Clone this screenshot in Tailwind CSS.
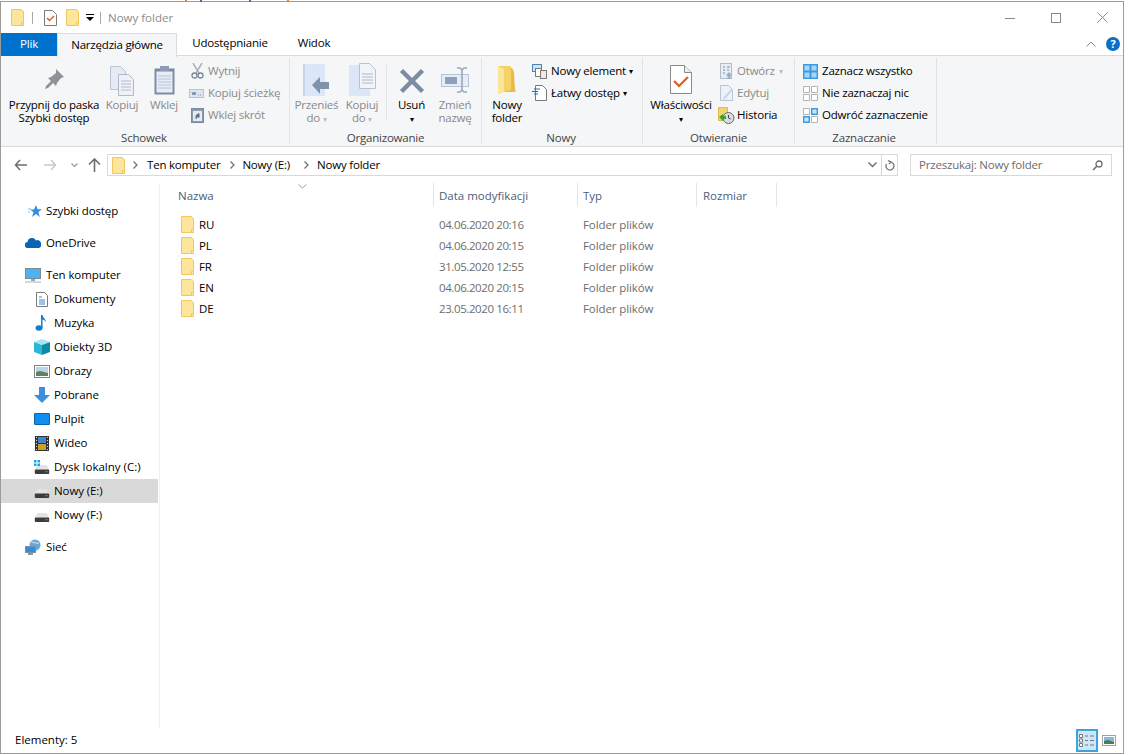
<!DOCTYPE html>
<html lang="pl">
<head>
<meta charset="UTF-8" />
<title>Nowy folder</title>
<script src="https://cdn.jsdelivr.net/npm/@tailwindcss/browser@4"></script>
</head>
<body class="bg-white h-[755px] w-[1128px] overflow-hidden font-['Open_Sans',sans-serif] text-[11.5px] tracking-[-0.2px] leading-[14px] text-black">

<svg width="0" height="0" class="absolute">
  <symbol id="folder" viewBox="0 0 13 17">
    <path d="M.5.5h9.500l2.500 2v11h-2v3H.5z" fill="#fde59b" stroke="#eec85a"/>
    <path d="M10.500 13.500v3h2v-3z" fill="#fbe9ad" stroke="#eec85a"/>
  </symbol>
  <symbol id="drive" viewBox="0 0 16 10">
    <path d="M3 0h10l3 5H0z" fill="#e3e3e3"/>
    <rect y="5" width="16" height="5" rx="1" fill="#3d3d3d"/>
    <rect x="12" y="7" width="2" height="1" fill="#4ed964"/>
  </symbol>
</svg>

<!-- bits of the window behind -->
<div class="absolute left-[185px] top-0 w-[2px] h-[2px] bg-[#d9823b]"></div>
<div class="absolute left-[200px] top-0 w-[2px] h-[2px] bg-[#3a6ea5]"></div>
<div class="absolute left-[249px] top-0 w-[2px] h-[2px] bg-[#3a6ea5]"></div>
<div class="absolute left-[287px] top-0 w-[2px] h-[2px] bg-[#d9823b]"></div>

<div class="w-[1124px] h-[753px] mt-px border border-[#9c9c9c] flex flex-col bg-white">

  <!-- title bar -->
  <div class="h-[31px] flex items-center shrink-0">
    <svg class="ml-[10px]" width="13" height="17"><use href="#folder"/></svg>
    <div class="ml-[8px] w-px h-[12px] bg-[#a8a8a8]"></div>
    <svg class="ml-[11px]" width="13" height="16" viewBox="0 0 13 16"><path d="M.5.5h8l4 4v11H.5z" fill="#fff" stroke="#7a7a7a"/><path d="M3 8l2.500 2.500L10 6" fill="none" stroke="#e8591d" stroke-width="1.400"/></svg>
    <svg class="ml-[9px]" width="13" height="17"><use href="#folder"/></svg>
    <svg class="ml-[7px]" width="9" height="8" viewBox="0 0 9 8"><path d="M0 0h8v1H0zM0 3h8L4 7z" fill="#000"/></svg>
    <div class="ml-[5px] w-px h-[12px] bg-[#a8a8a8]"></div>
    <span class="ml-[7px] text-[#8c8c8c] tracking-normal">Nowy folder</span>
    <div class="ml-auto flex items-center -mr-[2px]">
      <div class="w-[46px] flex justify-center"><svg width="10" height="10"><path d="M0 5.500h10" stroke="#8a8a8a"/></svg></div>
      <div class="w-[46px] flex justify-center"><svg width="10" height="10"><rect x=".5" y=".5" width="9" height="9" fill="none" stroke="#8a8a8a"/></svg></div>
      <div class="w-[46px] flex justify-center"><svg width="11" height="11"><path d="M.5.500l10 10M10.500.5l-10 10" stroke="#8a8a8a"/></svg></div>
    </div>
  </div>

  <!-- tabs -->
  <div class="h-[23px] flex shrink-0 border-b border-[#dadbdc] relative">
    <div class="w-[56px] h-[23px] pb-px bg-[#0072ce] text-white flex items-center justify-center">Plik</div>
    <div class="w-[120px] h-[24px] pb-[2px] bg-[#f5f6f7] border-x border-t border-[#dadbdc] flex items-center justify-center z-10">Narzędzia główne</div>
    <div class="w-[106px] pb-[2px] flex items-center justify-center">Udostępnianie</div>
    <div class="w-[46px] pb-[2px] flex items-center justify-center ml-[8px]">Widok</div>
    <div class="ml-auto flex items-center mr-[3px] gap-[10px]">
      <svg width="10" height="6"><path d="M.5 5.500L5 1l4.500 4.500" fill="none" stroke="#8c8c8c"/></svg>
      <div class="w-[14px] h-[14px] rounded-full bg-[#0a6fc9] text-white font-bold text-[11px] flex items-center justify-center">?</div>
    </div>
  </div>

  <!-- ribbon -->
  <div class="h-[91px] bg-[#f5f6f7] border-b border-[#dadbdc] flex shrink-0">

    <!-- Schowek -->
    <div class="w-[289px] border-r border-[#e2e3e4] my-[2px] flex flex-col">
      <div class="flex-1 flex pt-[2px] text-[#8a8a8a]">
        <div class="w-[98px] ml-[4px] flex flex-col items-center text-black">
          <div class="h-[38px] flex items-start pt-[9px]">
            <svg width="22" height="21" viewBox="0 0 22 21"><path d="M13 0l8 8-3 1-4 5-1 3-3-3-5 5-3 1 1-3 5-5-3-3 3-1 5-4z" fill="#8d9299"/></svg>
          </div>
          <span class="text-center leading-[13px]">Przypnij do paska<br>Szybki dostęp</span>
        </div>
        <div class="w-[36px] ml-[1px] flex flex-col items-center">
          <div class="h-[38px] pt-[6px]">
            <svg width="24" height="30" viewBox="0 0 24 30"><path d="M.5.500h10l5 5v18H.5z" fill="#e6ebf3" stroke="#b9c3d2"/><path d="M8.500 8.500h10l5 5v16h-15z" fill="#eef2f8" stroke="#aeb9ca"/><path d="M11 15h10M11 18h10M11 21h10M11 24h10" stroke="#b3bccb"/></svg>
          </div>
          <span class="leading-[13px]">Kopiuj</span>
        </div>
        <div class="w-[44px] ml-[2px] flex flex-col items-center">
          <div class="h-[38px] pt-[5px]">
            <svg width="21" height="30" viewBox="0 0 21 30"><rect x=".5" y="3.500" width="20" height="26" fill="#7e8ca3"/><rect x="2.500" y="6.500" width="16" height="21" fill="#e7edf7"/><path d="M4 11h13M4 14h13M4 17h13M4 20h13M4 23h13" stroke="#b7c2d4"/><rect x="6" y="1" width="9" height="5" fill="#8e9bb0"/></svg>
          </div>
          <span class="leading-[13px]">Wklej</span>
        </div>
        <div class="ml-[5px] flex flex-col">
          <div class="h-[22px] flex items-center gap-[4px]">
            <svg width="13" height="16" viewBox="0 0 13 16"><path d="M2 0l6 10M11 0L5 10" stroke="#a9b0bb" stroke-width="1.500"/><circle cx="3.500" cy="12.500" r="2.500" fill="none" stroke="#7a8797" stroke-width="1.300"/><circle cx="9.500" cy="12.500" r="2.500" fill="none" stroke="#7a8797" stroke-width="1.300"/></svg>
            <span>Wytnij</span>
          </div>
          <div class="h-[22px] flex items-center gap-[4px] -ml-[2px]">
            <svg width="15" height="9" viewBox="0 0 15 9"><rect x=".5" y=".5" width="14" height="8" fill="#dde5f2" stroke="#b8c4d6"/><path d="M3 3l1 3 1-3 1 3 1-3M9 6h1M11 6h1" fill="none" stroke="#6a7a92" stroke-width=".8"/></svg>
            <span>Kopiuj ścieżkę</span>
          </div>
          <div class="h-[22px] flex items-center gap-[4px]">
            <svg width="13" height="16" viewBox="0 0 13 16"><rect x=".5" y="1.500" width="12" height="14" fill="#8b99ad" stroke="#7d8ba0"/><rect x="2" y="4" width="9" height="10" fill="#e6ebf3"/><path d="M5 12V8.500h3M8 6.500v4l-3-2z" fill="#5f6f88" stroke="#5f6f88"/></svg>
            <span>Wklej skrót</span>
          </div>
        </div>
      </div>
      <div class="h-[17px] text-center text-[#444] pt-[4px] pr-[2px]">Schowek</div>
    </div>

    <!-- Organizowanie -->
    <div class="w-[192px] border-r border-[#e2e3e4] my-[2px] flex flex-col">
      <div class="flex-1 flex pt-[2px] text-[#8a8a8a]">
        <div class="w-[45px] ml-[4px] flex flex-col items-center">
          <div class="h-[38px] pt-[4px]">
            <svg width="27" height="32" viewBox="0 0 27 32"><path d="M0 0h22v32H0z" fill="#dbe7f6"/><path d="M0 0h2v32H0z" fill="#c5d6ea"/><path d="M9 22l8-8v5h9v7h-9v5z" transform="translate(0 -1)" fill="#7f93ad"/></svg>
          </div>
          <span class="leading-[13px] text-center">Przenieś<br>do <span class="text-[#bbb] text-[8px]">▾</span></span>
        </div>
        <div class="w-[44px] ml-[1px] flex flex-col items-center">
          <div class="h-[38px] pt-[3px]">
            <svg width="27" height="33" viewBox="0 0 27 33"><path d="M0 2h21v31H0z" fill="#dbe7f6"/><path d="M10.500.5h10l6 6v19h-16z" fill="#f0f3f8" stroke="#b8c2d1"/><path d="M13 11h11M13 14h11M13 17h11M13 20h11" stroke="#b0bac9"/></svg>
          </div>
          <span class="leading-[13px] text-center">Kopiuj<br>do <span class="text-[#bbb] text-[8px]">▾</span></span>
        </div>
        <div class="w-px h-[55px] mt-[5px] ml-[2px] bg-[#e2e3e4]"></div>
        <div class="w-[45px] ml-[2px] flex flex-col items-center text-black">
          <div class="h-[38px] pt-[8px]">
            <svg width="26" height="26" viewBox="0 0 26 26"><path d="M2.500 2.500l21 21M23.500 2.500l-21 21" stroke="#7d8ba3" stroke-width="4.500"/></svg>
          </div>
          <span class="leading-[13px] text-center">Usuń<br><span class="text-[8px]">▾</span></span>
        </div>
        <div class="w-[42px] flex flex-col items-center">
          <div class="h-[38px] pt-[7px]">
            <svg width="28" height="26" viewBox="0 0 28 26"><rect x=".5" y="7.500" width="27" height="12" fill="#e6edf7" stroke="#b7c4d6"/><rect x="4" y="10" width="12" height="7" fill="#8da1bb"/><path d="M16 1h3l2 2 2-2h3M21 3v20M16 25h3l2-2 2 2h3" fill="none" stroke="#9aa7b9" stroke-width="1.600"/></svg>
          </div>
          <span class="leading-[13px] text-center">Zmień<br>nazwę</span>
        </div>
      </div>
      <div class="h-[17px] text-center text-[#444] pt-[4px]">Organizowanie</div>
    </div>

    <!-- Nowy -->
    <div class="w-[161px] border-r border-[#e2e3e4] my-[2px] flex flex-col">
      <div class="flex-1 flex pt-[2px]">
        <div class="w-[46px] ml-[2px] flex flex-col items-center">
          <div class="h-[38px] pt-[6px]">
            <svg width="19" height="28" viewBox="0 0 19 28"><path d="M0 0h13v8l5 18H6L0 28z" fill="#f6d365"/><path d="M13 2h1l2 4 1 19-2 1H6l7-2z" fill="#e9b949"/><path d="M0 0l6 3v23l-6 2z" fill="#fbe59c"/></svg>
          </div>
          <span class="leading-[13px] text-center">Nowy<br>folder</span>
        </div>
        <div class="ml-[2px] flex flex-col">
          <div class="h-[22px] flex items-center gap-[4px]">
            <svg width="15" height="15" viewBox="0 0 15 15"><rect x=".5" y=".5" width="9" height="7" fill="#cfe3f5" stroke="#4a85b8"/><rect x="3.500" y="4.500" width="6" height="8" fill="#fff" stroke="#7a7a7a"/><rect x="8.500" y="6.500" width="6" height="8" fill="#f7e4e4" stroke="#7a7a7a"/></svg>
            <span>Nowy element</span><span class="text-[8px] ml-[-1px]">▾</span>
          </div>
          <div class="h-[22px] flex items-center gap-[4px]">
            <svg width="15" height="16" viewBox="0 0 15 16"><path d="M3.500.5h7l4 4v11h-11z" fill="#fff" stroke="#7a7a7a"/><path d="M2 4h6M0 6.500h6M2 9h4" stroke="#1474c4"/></svg>
            <span>Łatwy dostęp</span><span class="text-[8px] ml-[-1px]">▾</span>
          </div>
        </div>
      </div>
      <div class="h-[17px] text-center text-[#444] pt-[4px] pr-[2px]">Nowy</div>
    </div>

    <!-- Otwieranie -->
    <div class="w-[152px] border-r border-[#e2e3e4] my-[2px] flex flex-col">
      <div class="flex-1 flex pt-[2px]">
        <div class="w-[68px] ml-[4px] flex flex-col items-center">
          <div class="h-[38px] pt-[5px]">
            <svg width="22" height="29" viewBox="0 0 22 29"><path d="M.5.500h14l7 7v21H.5z" fill="#fff" stroke="#8a8a8a"/><path d="M14.500.5v7h7" fill="#eee" stroke="#8a8a8a"/><path d="M4 16l5 5 9-9" fill="none" stroke="#e8591d" stroke-width="2.200"/></svg>
          </div>
          <span class="leading-[13px] text-center">Właściwości<br><span class="text-[8px]">▾</span></span>
        </div>
        <div class="ml-[5px] flex flex-col">
          <div class="h-[22px] flex items-center gap-[4px] text-[#8a8a8a]">
            <svg width="13" height="16" viewBox="0 0 13 16"><rect x=".5" y=".5" width="11" height="15" fill="#e8edf5" stroke="#b3bdcc"/><path d="M3 4h2M3 7h2M3 10h2M7 4h3M7 7h2" stroke="#7f8ea5" stroke-width="1.200"/><path d="M9 9l3.500 3.500H10.500V16H7.500v-3.500H5.500z" fill="#9eb0c7"/></svg>
            <span>Otwórz</span><span class="text-[8px] text-[#bbb]">▾</span>
          </div>
          <div class="h-[22px] flex items-center gap-[4px] text-[#8a8a8a]">
            <svg width="13" height="16" viewBox="0 0 13 16"><path d="M.5.5h8l4 4v11H.5z" fill="#eef2f8" stroke="#b9c3d2"/><path d="M3 13l8-9 1.500 1.500-8 9H3z" fill="#c8d6e8"/></svg>
            <span>Edytuj</span>
          </div>
          <div class="h-[22px] flex items-center gap-[2px] -ml-[2px]">
            <svg width="17" height="17" viewBox="0 0 17 17"><path d="M.5.5h9v13h-9z" fill="#f6d365" stroke="#e3bb4a"/><circle cx="10.500" cy="11" r="5.500" fill="#d8dcdf" stroke="#666"/><path d="M10.500 8v3l2 1" fill="none" stroke="#444"/><path d="M1 10l4-3v2h3v3H5v2z" fill="#3aa13a"/></svg>
            <span>Historia</span>
          </div>
        </div>
      </div>
      <div class="h-[17px] text-center text-[#444] pt-[4px]">Otwieranie</div>
    </div>

    <!-- Zaznaczanie -->
    <div class="w-[142px] border-r border-[#e2e3e4] my-[2px] flex flex-col">
      <div class="flex-1 pt-[2px] pl-[8px]">
        <div class="h-[22px] flex items-center gap-[4px]">
          <svg width="15" height="15" viewBox="0 0 15 15"><path d="M0 0h15v15H0z" fill="#3c9be0"/><path d="M1.500 1.500h5v5h-5zM8.500 1.500h5v5h-5zM1.500 8.500h5v5h-5zM8.500 8.500h5v5h-5z" fill="#a9d5f5"/></svg>
          <span>Zaznacz wszystko</span>
        </div>
        <div class="h-[22px] flex items-center gap-[4px]">
          <svg width="15" height="15" viewBox="0 0 15 15"><path d="M.5.500h6v6h-6zM8.500.500h6v6h-6zM.5 8.500h6v6h-6zM8.500 8.500h6v6h-6z" fill="#fff" stroke="#b5b5b5"/></svg>
          <span>Nie zaznaczaj nic</span>
        </div>
        <div class="h-[22px] flex items-center gap-[4px]">
          <svg width="15" height="15" viewBox="0 0 15 15"><path d="M.5.500h6v6h-6zM8.500 8.500h6v6h-6z" fill="#fff" stroke="#b5b5b5"/><path d="M8 0h7v7H8zM0 8h7v7H0z" fill="#3c9be0"/><path d="M9.500 1.500h4v4h-4zM1.500 9.500h4v4h-4z" fill="#cfe6f8"/></svg>
          <span>Odwróć zaznaczenie</span>
        </div>
      </div>
      <div class="h-[17px] text-center text-[#444] pt-[4px] pr-[3px]">Zaznaczanie</div>
    </div>
  </div>

  <!-- address bar -->
  <div class="h-[36px] flex items-center shrink-0">
    <svg class="ml-[13px]" width="13" height="12" viewBox="0 0 13 12"><path d="M6 1L1.500 6 6 11M2 6h11" fill="none" stroke="#6d6d6d" stroke-width="1.500"/></svg>
    <svg class="ml-[17px]" width="13" height="12" viewBox="0 0 13 12"><path d="M7 1l4.500 5L7 11M11 6H0" fill="none" stroke="#c9c9c9" stroke-width="1.500"/></svg>
    <svg class="ml-[14px]" width="7" height="5" viewBox="0 0 7 5"><path d="M.5.500L3.500 3.500 6.500.5" fill="none" stroke="#9a9a9a" stroke-width="1.200"/></svg>
    <svg class="ml-[10px]" width="13" height="14" viewBox="0 0 13 14"><path d="M1 6.500L6.500 1 12 6.500M6.500 1.500V14" fill="none" stroke="#6d6d6d" stroke-width="1.600"/></svg>
    <div class="ml-[6px] w-[775px] h-[22px] border border-[#d9d9d9] flex items-center">
      <svg class="ml-[4px]" width="13" height="17"><use href="#folder"/></svg>
      <svg class="ml-[8px]" width="5" height="8" viewBox="0 0 5 8"><path d="M.5.500L4 4 .5 7.500" fill="none" stroke="#6d6d6d" stroke-width="1.200"/></svg>
      <span class="ml-[9px]">Ten komputer</span>
      <svg class="ml-[10px]" width="5" height="8" viewBox="0 0 5 8"><path d="M.5.500L4 4 .5 7.500" fill="none" stroke="#6d6d6d" stroke-width="1.200"/></svg>
      <span class="ml-[7px]">Nowy (E:)</span>
      <svg class="ml-[14px]" width="5" height="8" viewBox="0 0 5 8"><path d="M.5.500L4 4 .5 7.500" fill="none" stroke="#6d6d6d" stroke-width="1.200"/></svg>
      <span class="ml-[8px]">Nowy folder</span>
      <svg class="ml-auto mr-[4px]" width="9" height="6" viewBox="0 0 9 6"><path d="M.5.500L4.500 4.500 8.500.5" fill="none" stroke="#6d6d6d" stroke-width="1.400"/></svg>
    </div>
    <div class="w-[16px] h-[22px] border border-l-0 border-[#d9d9d9] flex items-center justify-center">
      <svg width="10" height="12" viewBox="0 0 10 12"><path d="M3 1.500L6 3 4 5M5 3a4 4 0 1 1-3.500 2" fill="none" stroke="#6d6d6d" stroke-width="1.200"/></svg>
    </div>
    <div class="ml-[12px] w-[202px] h-[22px] border border-[#d9d9d9] flex items-center pl-[8px] pr-[8px] text-[#6d6d6d]">
      <span>Przeszukaj: Nowy folder</span>
      <svg class="ml-auto" width="11" height="11" viewBox="0 0 11 11"><circle cx="7" cy="4" r="3" fill="none" stroke="#6d6d6d" stroke-width="1.300"/><path d="M5 6l-4 4" stroke="#6d6d6d" stroke-width="1.600"/></svg>
    </div>
  </div>

  <!-- main -->
  <div class="flex-1 flex min-h-0">
    <!-- nav -->
    <div class="w-[157px] shrink-0 pt-[16px] leading-[24px] tracking-[-0.1px]">
      <div class="h-[24px] flex items-center pl-[27px]">
        <svg class="mr-[4px]" width="14" height="13" viewBox="0 0 14 13"><path d="M8 0l1.500 4.300H14L10.400 7l1.300 5-3.700-3-4 3 1.500-4.800L2 4.500h4z" fill="#2f8fdc"/><path d="M0 4h3M0 7h2" stroke="#7cbce9"/></svg>
        <span>Szybki dostęp</span>
      </div>
      <div class="h-[8px]"></div>
      <div class="h-[24px] flex items-center pl-[24px]">
        <svg class="mr-[5px]" width="16" height="10" viewBox="0 0 16 10"><path d="M3 10a3 3 0 0 1-.5-6A4.500 4.500 0 0 1 11 2.500a3.500 3.500 0 0 1 5 3.500v.5a3 3 0 0 1-2 3.500z" fill="#0a64b4"/></svg>
        <span>OneDrive</span>
      </div>
      <div class="h-[8px]"></div>
      <div class="h-[24px] flex items-center pl-[24px]">
        <svg class="mr-[5px]" width="16" height="15" viewBox="0 0 16 15"><rect x=".5" y=".5" width="15" height="10" fill="#4fb2ee" stroke="#7a8a99"/><path d="M6 11h4v2H6z" fill="#9aa7b3"/><path d="M0 14h16" stroke="#a8b3bd"/></svg>
        <span>Ten komputer</span>
      </div>
      <div class="h-[24px] flex items-center pl-[35px]">
        <svg class="mr-[6px]" width="12" height="15" viewBox="0 0 12 15"><path d="M.5.500h8l3 3v11H.5z" fill="#fff" stroke="#7a7a7a"/><path d="M3 5h3M3 8h6M3 10h6M3 12h6" stroke="#3a84c5"/></svg>
        <span>Dokumenty</span>
      </div>
      <div class="h-[24px] flex items-center pl-[35px]">
        <svg class="mr-[7px] -ml-[1px]" width="12" height="16" viewBox="0 0 12 16"><ellipse cx="4" cy="13" rx="3.500" ry="2.700" fill="#0c7fd9"/><path d="M6 13V0h1.500c.5 3 3 3.500 3.500 7-1-1.500-2.500-2.500-3.500-2.500V13z" fill="#0c7fd9"/></svg>
        <span>Muzyka</span>
      </div>
      <div class="h-[24px] flex items-center pl-[33px]">
        <svg class="mr-[4px]" width="16" height="16" viewBox="0 0 16 16"><path d="M8 0l8 3-8 3-8-3z" fill="#a5e6f5"/><path d="M0 3l8 3v10l-8-3z" fill="#2cb7d4"/><path d="M16 3L8 6v10l8-3z" fill="#0d8aa8"/></svg>
        <span>Obiekty 3D</span>
      </div>
      <div class="h-[24px] flex items-center pl-[33px]">
        <svg class="mr-[4px]" width="16" height="13" viewBox="0 0 16 13"><rect x=".5" y=".5" width="15" height="12" fill="#fff" stroke="#808080"/><rect x="2" y="2" width="12" height="9" fill="#bcd4e2"/><path d="M2 7l4-1 8 2v3H2z" fill="#5f8066"/></svg>
        <span>Obrazy</span>
      </div>
      <div class="h-[24px] flex items-center pl-[33px]">
        <svg class="mr-[4px]" width="16" height="16" viewBox="0 0 16 16"><path d="M5 0h6v8h5l-8 8-8-8h5z" fill="#3c8ede"/></svg>
        <span>Pobrane</span>
      </div>
      <div class="h-[24px] flex items-center pl-[33px]">
        <svg class="mr-[4px]" width="16" height="12" viewBox="0 0 16 12"><rect x=".5" y=".5" width="15" height="11" rx=".5" fill="#0f8ef0" stroke="#0a65ad"/></svg>
        <span>Pulpit</span>
      </div>
      <div class="h-[24px] flex items-center pl-[34px]">
        <svg class="mr-[5px]" width="14" height="15" viewBox="0 0 14 15"><rect width="14" height="15" fill="#333"/><rect x="3" y="1" width="8" height="6" fill="#3d87d0"/><rect x="3" y="8" width="8" height="6" fill="#c9a227"/><path d="M1 1h1v1H1zM1 4h1v1H1zM1 7h1v1H1zM1 10h1v1H1zM1 13h1v1H1zM12 1h1v1h-1zM12 4h1v1h-1zM12 7h1v1h-1zM12 10h1v1h-1zM12 13h1v1h-1z" fill="#ddd"/></svg>
        <span>Wideo</span>
      </div>
      <div class="h-[24px] flex items-center pl-[33px]">
        <div class="relative w-[16px] h-[14px] mr-[4px]">
          <svg class="absolute left-0 bottom-0" width="16" height="9"><use href="#drive"/></svg>
          <svg class="absolute left-0 top-0" width="6" height="6" viewBox="0 0 6 6"><path d="M0 0h2.500v2.500H0zM3.500 0H6v2.500H3.500zM0 3.500h2.500V6H0zM3.500 3.500H6V6H3.500z" fill="#10a5ec"/></svg>
        </div>
        <span class="tracking-normal">Dysk lokalny (C:)</span>
      </div>
      <div class="h-[24px] flex items-center pl-[33px] bg-[#d9d9d9]">
        <svg class="mr-[4px] mt-[4px]" width="16" height="9"><use href="#drive"/></svg>
        <span>Nowy (E:)</span>
      </div>
      <div class="h-[24px] flex items-center pl-[33px]">
        <svg class="mr-[4px] mt-[4px]" width="16" height="9"><use href="#drive"/></svg>
        <span>Nowy (F:)</span>
      </div>
      <div class="h-[8px]"></div>
      <div class="h-[24px] flex items-center pl-[24px]">
        <svg class="mr-[5px]" width="16" height="16" viewBox="0 0 16 16"><circle cx="10" cy="6" r="5.500" fill="#6aa7da"/><path d="M6 3c3 0 5 2 8 1" stroke="#cfe6f5" fill="none"/><rect x=".5" y="7.500" width="10" height="6" fill="#2e8fe0" stroke="#7f8f9f"/><path d="M3 15h5" stroke="#8a97a3" stroke-width="2"/></svg>
        <span>Sieć</span>
      </div>
    </div>
    <div class="w-[2px] border-r border-[#f0f0f0] shrink-0"></div>

    <!-- file list -->
    <div class="flex-1 relative text-[#6d6d6d]">
      <svg class="absolute left-[138px] top-[1px]" width="9" height="5" viewBox="0 0 9 5"><path d="M.5.500L4.500 4 8.500.5" fill="none" stroke="#a0a0a0"/></svg>
      <div class="h-[24px] flex text-[#4c607a] tracking-normal">
        <div class="w-[274px] pl-[18px] pt-[6px] border-r border-[#e5e5e5]">Nazwa</div>
        <div class="w-[144px] pl-[5px] pt-[6px] border-r border-[#e5e5e5]">Data modyfikacji</div>
        <div class="w-[119px] pl-[5px] pt-[6px] border-r border-[#e5e5e5]">Typ</div>
        <div class="w-[80px] pl-[6px] pt-[6px] border-r border-[#e5e5e5]">Rozmiar</div>
      </div>
      <div class="mt-[7px]">
        <div class="h-[21px] flex items-center">
          <div class="w-[274px] pl-[21px] flex items-center text-black"><svg width="13" height="17"><use href="#folder"/></svg><span class="ml-[5px]">RU</span></div>
          <div class="w-[144px] pl-[5px] tracking-[-0.4px]">04.06.2020 20:16</div>
          <div class="pl-[5px] tracking-[-0.1px]">Folder plików</div>
        </div>
        <div class="h-[21px] flex items-center">
          <div class="w-[274px] pl-[21px] flex items-center text-black"><svg width="13" height="17"><use href="#folder"/></svg><span class="ml-[5px]">PL</span></div>
          <div class="w-[144px] pl-[5px] tracking-[-0.4px]">04.06.2020 20:15</div>
          <div class="pl-[5px] tracking-[-0.1px]">Folder plików</div>
        </div>
        <div class="h-[21px] flex items-center">
          <div class="w-[274px] pl-[21px] flex items-center text-black"><svg width="13" height="17"><use href="#folder"/></svg><span class="ml-[5px]">FR</span></div>
          <div class="w-[144px] pl-[5px] tracking-[-0.4px]">31.05.2020 12:55</div>
          <div class="pl-[5px] tracking-[-0.1px]">Folder plików</div>
        </div>
        <div class="h-[21px] flex items-center">
          <div class="w-[274px] pl-[21px] flex items-center text-black"><svg width="13" height="17"><use href="#folder"/></svg><span class="ml-[5px]">EN</span></div>
          <div class="w-[144px] pl-[5px] tracking-[-0.4px]">04.06.2020 20:15</div>
          <div class="pl-[5px] tracking-[-0.1px]">Folder plików</div>
        </div>
        <div class="h-[21px] flex items-center">
          <div class="w-[274px] pl-[21px] flex items-center text-black"><svg width="13" height="17"><use href="#folder"/></svg><span class="ml-[5px]">DE</span></div>
          <div class="w-[144px] pl-[5px] tracking-[-0.4px]">23.05.2020 16:11</div>
          <div class="pl-[5px] tracking-[-0.1px]">Folder plików</div>
        </div>
      </div>
    </div>
  </div>

  <!-- status bar -->
  <div class="h-[25px] shrink-0 flex items-center pl-[14px] tracking-normal">
    <span class="mb-[2px]">Elementy: 5</span>
    <div class="ml-auto flex items-center mr-[7px] gap-[4px]">
      <div class="w-[22px] h-[23px] bg-[#cce8f8] border-2 border-[#3fa2d8] flex items-center justify-center">
        <svg width="16" height="13" viewBox="0 0 16 13"><path d="M.5.500h3v3h-3zM.5 5h3v3h-3zM.5 9.500h3v3h-3z" fill="#fff" stroke="#777"/><path d="M6 2h3M11 2h4M6 6.500h3M11 6.500h4M6 11h3M11 11h4" stroke="#777"/></svg>
      </div>
      <svg width="14" height="11" viewBox="0 0 14 11"><rect x=".5" y=".5" width="13" height="10" fill="#fff" stroke="#a0a0a0"/><rect x="2" y="2" width="10" height="7" fill="#86b9df"/><path d="M2 6l4-1 6 2v2H2z" fill="#4e7a5a"/></svg>
    </div>
  </div>
</div>
</body>
</html>
